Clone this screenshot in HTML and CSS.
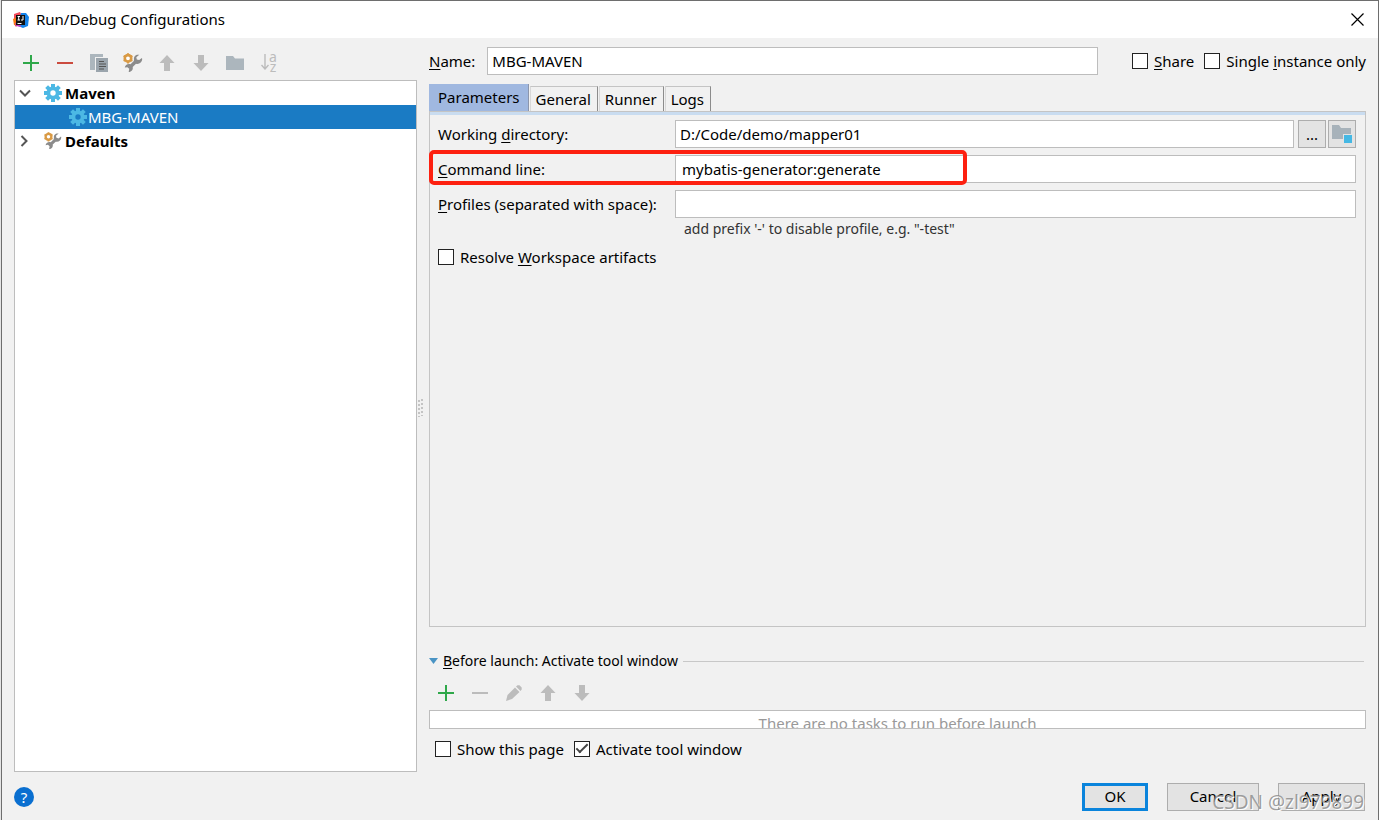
FILE: index.html
```html
<!DOCTYPE html>
<html lang="en">
  <head>
    <meta charset="UTF-8">
    <meta name="viewport" content="width=device-width, initial-scale=1">
    <title>Run/Debug Configurations</title>
    <link rel="stylesheet" href="styles.css">
  </head>
  <body>
    <!-- shared icons -->
    <svg class="sprite" width="0" height="0">
      <symbol id="plus" viewBox="0 0 16 16"><path d="M8 0v16M0 8h16" stroke="#2fa84a" stroke-width="2"/></symbol>
      <symbol id="minus" viewBox="0 0 16 16"><path d="M0 8h16" stroke="currentColor" stroke-width="2"/></symbol>
      <symbol id="up" viewBox="0 0 16 16"><path d="M8 0l7.500 8H11v8H5V8H.5z" fill="#bcbcbc"/></symbol>
      <symbol id="down" viewBox="0 0 16 16"><path d="M8 16l7.500-8H11V0H5v8H.5z" fill="#bcbcbc"/></symbol>
      <symbol id="gear" viewBox="0 0 18 18">
        <g fill="#4cb8e4">
          <rect x="7" y="0" width="4" height="18"/>
          <rect x="7" y="0" width="4" height="18" transform="rotate(45 9 9)"/>
          <rect x="7" y="0" width="4" height="18" transform="rotate(90 9 9)"/>
          <rect x="7" y="0" width="4" height="18" transform="rotate(135 9 9)"/>
          <circle cx="9" cy="9" r="6.500"/>
        </g>
        <circle cx="9" cy="9" r="2.700" fill="var(--hole)"/>
      </symbol>
      <symbol id="wrench" viewBox="0 0 20 20">
        <path d="M16.300 1.800c-3-.8-5.800 1.400-5.300 4.600L10.800 8 7.500 11.300c-2.800-.9-5.500.8-5.700 3.300l2.600-.4 1.800 1.600-.5 3.200c2.800 0 4.600-2.400 4-5l3.300-3.300c3.300.9 6-1.600 6.200-4.700l-.3-.9-2.700 2-2.400-.6-.5-2.300z" fill="#8b8b8b"/>
        <circle cx="5" cy="5.300" r="3.200" fill="#fff" stroke="#d99a45" stroke-width="2.600"/>
        <path d="M5 .2v1.500M5 9v1.500M.6 2.800l1.300.7M8 7.100l1.400.7M.6 7.800l1.300-.7M8 3.500l1.400-.7" stroke="#d99a45" stroke-width="2"/>
      </symbol>
    </svg>

    <div class="dialog">
      <header class="titlebar">
        <svg class="logo" width="16" height="16" viewBox="0 0 16 16">
          <path d="M1 2l6-2 3 6-7 9-2-3z" fill="#f24a5a"/>
          <path d="M0 7l4-2 3 9-6-1z" fill="#f97a12"/>
          <path d="M8 1l5 0 3 4-1 9-5 2-5-2z" fill="#1583e9"/>
          <path d="M2 11l5 1 1 3-5-1z" fill="#c13cc1"/>
          <path d="M3 3h9v10H3z" fill="#111"/>
          <path d="M4.500 4.500h2.500M5.700 4.500v3.500M4.500 8h2.500M10 4v4H8M4.500 11.500h4" stroke="#fff" fill="none"/>
        </svg>
        <span>Run/Debug Configurations</span>
        <button class="close" aria-label="Close">
          <svg width="13" height="13" viewBox="0 0 13 13"><path d="M.5.5l12 12M12.500.5l-12 12" stroke="#000" stroke-width="1.200"/></svg>
        </button>
      </header>

      <main class="content">
        <aside class="side">
          <div class="toolbar">
            <button aria-label="Add"><svg width="16" height="16"><use href="#plus"/></svg></button>
            <button class="red" aria-label="Remove"><svg width="16" height="16"><use href="#minus"/></svg></button>
            <button aria-label="Copy">
              <svg width="18" height="18" viewBox="0 0 18 18">
                <path d="M0 0h13v3H5v13H0z" fill="#acb6bd"/>
                <path d="M6 4h12v14H6z" fill="#9ba5ad"/>
                <path d="M9 7.500h5M9 10h7M9 12.500h7M9 15h5" stroke="#555" stroke-width="1.200"/>
              </svg>
            </button>
            <button aria-label="Edit defaults"><svg width="20" height="20"><use href="#wrench"/></svg></button>
            <button aria-label="Move up"><svg width="16" height="16"><use href="#up"/></svg></button>
            <button aria-label="Move down"><svg width="16" height="16"><use href="#down"/></svg></button>
            <button aria-label="New folder">
              <svg width="18" height="14" viewBox="0 0 18 14"><path d="M0 0h7l2 2.500h9V14H0z" fill="#acb6bd"/></svg>
            </button>
            <button class="sort" aria-label="Sort">
              <svg width="8" height="16" viewBox="0 0 8 16"><path d="M4 0v15M.5 11L4 15l3.500-4" stroke="#bcbcbc" stroke-width="1.400" fill="none"/></svg>
              <span>a<br>z</span>
            </button>
          </div>
          <ul class="tree">
            <li class="node">
              <svg class="arrow" width="12" height="12" viewBox="0 0 12 12"><path d="M1 3.500l5 5 5-5" stroke="#555" stroke-width="2" fill="none"/></svg>
              <svg width="18" height="18"><use href="#gear"/></svg>
              <b>Maven</b>
            </li>
            <li class="node child selected">
              <svg width="18" height="18"><use href="#gear"/></svg>
              <span>MBG-MAVEN</span>
            </li>
            <li class="node">
              <svg class="arrow" width="12" height="12" viewBox="0 0 12 12"><path d="M2.500 1l5 5-5 5" stroke="#555" stroke-width="2" fill="none"/></svg>
              <svg width="18" height="18"><use href="#wrench"/></svg>
              <b>Defaults</b>
            </li>
          </ul>
        </aside>

        <div class="splitter">
          <svg width="6" height="18" viewBox="0 0 6 18"><path d="M2 1v17M5 0v17" stroke="#c4c4c4" stroke-width="2" stroke-dasharray="2 2"/></svg>
        </div>

        <section class="config">
          <div class="namerow">
            <label for="name"><u>N</u>ame:</label>
            <input id="name" class="field" type="text" value="MBG-MAVEN">
            <div class="checks">
              <label class="check"><input type="checkbox"><span><u>S</u>hare</span></label>
              <label class="check"><input type="checkbox"><span>Single <u>i</u>nstance only</span></label>
            </div>
          </div>

          <div class="tabs">
            <button class="tab active">Parameters</button>
            <button class="tab">General</button>
            <button class="tab">Runner</button>
            <button class="tab">Logs</button>
          </div>

          <div class="panel">
            <div class="row">
              <label for="dir">Working <u>d</u>irectory:</label>
              <input id="dir" class="field" type="text" value="D:/Code/demo/mapper01">
              <button class="small">...</button>
              <button class="small" aria-label="Choose module">
                <svg width="20" height="20" viewBox="0 0 20 20">
                  <path d="M0 1h7l2 3h10v11H0z" fill="#a7b2ba"/>
                  <path d="M11 10h9v10h-9z" fill="#e3e3e3"/>
                  <path d="M12 11h8v8h-8z" fill="#45b8e4"/>
                </svg>
              </button>
            </div>
            <div class="row marked">
              <label for="cmd"><u>C</u>ommand line:</label>
              <input id="cmd" class="field" type="text" value="mybatis-generator:generate">
            </div>
            <div class="row">
              <label for="profiles"><u>P</u>rofiles (separated with space):</label>
              <input id="profiles" class="field" type="text">
            </div>
            <p class="hint">add prefix '-' to disable profile, e.g. "-test"</p>
            <label class="check"><input type="checkbox"><span>Resolve <u>W</u>orkspace artifacts</span></label>
          </div>

          <div class="before">
            <svg width="9" height="6" viewBox="0 0 9 6"><path d="M0 0h9L4.500 6z" fill="#4a94c4"/></svg>
            <span><u>B</u>efore launch: Activate tool window</span>
          </div>
          <div class="toolbar">
            <button aria-label="Add task"><svg width="16" height="16"><use href="#plus"/></svg></button>
            <button class="gray" aria-label="Remove task"><svg width="16" height="16"><use href="#minus"/></svg></button>
            <button aria-label="Edit task">
              <svg width="16" height="16" viewBox="0 0 16 16"><path d="M0 16l1.500-6 7.500-7.500 4.500 4.500L6 14zM10 1.500L11.500.3h2L15.700 2.500v2L14.500 6z" fill="#bcbcbc"/></svg>
            </button>
            <button aria-label="Task up"><svg width="16" height="16"><use href="#up"/></svg></button>
            <button aria-label="Task down"><svg width="16" height="16"><use href="#down"/></svg></button>
          </div>
          <div class="tasks">There are no tasks to run before launch</div>
          <div class="checks bottom">
            <label class="check"><input type="checkbox"><span>Show this page</span></label>
            <label class="check"><input type="checkbox" checked><span>Activate tool window</span></label>
          </div>
        </section>
      </main>

      <footer class="footer">
        <button class="help" aria-label="Help">?</button>
        <button class="btn ok">OK</button>
        <button class="btn">Cancel</button>
        <button class="btn">Apply</button>
      </footer>
      <div class="watermark">CSDN @zl979899</div>
    </div>
  </body>
</html>
```
FILE: styles.css
```css
*, *::before, *::after{box-sizing: border-box;}
body{
  margin: 0;
  background-color: #e4e4e4;
  font-family: "Noto Sans", "Open Sans", sans-serif;
  font-size: 15px;
  line-height: 20px;
  color: #000;
}
button, input{
  font: inherit;
  color: inherit;
  margin: 0;
}
button{
  padding: 0;
  border: none;
  background: none;
}
u{
  text-underline-offset: 2px;
}
.sprite{
  position: absolute;
}
.dialog{
  position: relative;
  display: flex;
  flex-direction: column;
  height: 100vh;
  margin-left: 1px;
  border: 1px solid #6e6e6e;
  border-bottom: none;
  background-color: #f1f1f1;
}
.titlebar{
  display: flex;
  align-items: center;
  gap: 7px;
  flex: 0 0 37px;
  padding: 0 14px 0 11px;
  background-color: #fff;
}
.titlebar span{
  padding-bottom: 2px;
}
.close{
  display: flex;
  margin-left: auto;
}
.content{
  display: flex;
  flex: 1;
  min-height: 0;
  padding: 0 12px;
}

/* left column */
.side{
  display: flex;
  flex-direction: column;
  flex: 0 0 403px;
}
.toolbar{
  display: flex;
  align-items: center;
  gap: 14px;
  padding-left: 7px;
}
.side .toolbar{
  height: 42px;
  padding-top: 8px;
}
.toolbar button{
  display: flex;
  align-items: center;
  justify-content: center;
  width: 20px;
  height: 20px;
}
.red{color: #cb4b3f;}
.gray{color: #bcbcbc;}
.toolbar .sort{
  padding-bottom: 3px;
  color: #bcbcbc;
  font-size: 14px;
  line-height: 10px;
}
.tree{
  flex: 1;
  margin: 0;
  padding: 0;
  list-style: none;
  border: 1px solid #bdbdbd;
  background-color: #fff;
}
.node{
  --hole: #fff;
  display: flex;
  align-items: center;
  height: 24px;
  padding-left: 4px;
  gap: 3px;
}
.arrow{
  margin-right: 10px;
}
.child{
  padding-left: 54px;
  gap: 1px;
}
.selected{
  --hole: #1a7bc4;
  color: #fff;
  background-color: #1a7bc4;
}
.splitter{
  display: flex;
  align-items: center;
  flex: 0 0 12px;
  padding-top: 6px;
}

/* right column */
.config{
  display: flex;
  flex-direction: column;
  flex: 1;
  min-width: 0;
}
.namerow{
  display: flex;
  align-items: center;
  gap: 12px;
  padding: 9px 0;
}
.field{
  flex: 1;
  min-width: 0;
  height: 28px;
  padding: 0 4px;
  border: 1px solid #bdbdbd;
  background-color: #fff;
  outline: none;
}
.checks{
  display: flex;
  gap: 10px;
}
.namerow .checks{
  padding-left: 22px;
}
.check{
  display: flex;
  align-items: center;
  gap: 6px;
}
.check input{
  appearance: none;
  display: grid;
  place-items: center;
  width: 16px;
  height: 16px;
  border: 1px solid #222;
  background-color: #fff;
}
.check input:checked::before{
  content: "";
  width: 12px;
  height: 6px;
  margin-bottom: 4px;
  border-left: 2px solid #444;
  border-bottom: 2px solid #444;
  transform: rotate(-45deg);
}
.tabs{
  display: flex;
  align-items: flex-end;
  height: 27px;
}
.tab{
  height: 25px;
  margin-right: 1px;
  padding: 0 6px 0 5px;
  border-top: 1px solid #c4c4c4;
  border-left: 1px solid #d8d8d8;
  border-right: 1px solid #8c8c8c;
}
.tab.active{
  height: 27px;
  padding: 0 8px 2px 9px;
  border: none;
  border-right: 1px solid #8c96ac;
  background-color: #a0b8e0;
}
.panel{
  flex: 1;
  padding: 5px 9px 0 8px;
  border: 1px solid #c4c4c4;
  box-shadow: inset 0 3px #c9dcf0;
}
.row{
  display: flex;
  align-items: center;
  margin: 3px 0 7px;
}
.row + .row{
  margin-top: 0;
}
.row label{
  flex: 0 0 237px;
}
.small{
  display: flex;
  align-items: center;
  justify-content: center;
  width: 28px;
  height: 28px;
  margin-left: 2px;
  border: 1px solid #adadad;
  background-color: #e3e3e3;
}
.field + .small{
  margin-left: 4px;
}
.marked{
  position: relative;
}
.marked .field{
  padding-left: 6px;
}
/* red frame round the command line */
.marked::after{
  content: "";
  position: absolute;
  left: -9px;
  top: -5px;
  width: 538px;
  height: 35px;
  border: 4px solid #fd2010;
  border-radius: 5px;
  pointer-events: none;
}
.hint{
  margin: -6px 0 8px 246px;
  font-size: 14px;
  color: #333;
}
.before{
  display: flex;
  align-items: center;
  gap: 5px;
  padding: 24px 2px 12px 0;
  font-size: 14px;
}
.before::after{
  content: "";
  flex: 1;
  height: 1px;
  background-color: #c8c8c8;
}
.tasks{
  height: 19px;
  margin-top: 7px;
  padding-top: 2px;
  overflow: hidden;
  border: 1px solid #bdbdbd;
  background-color: #fff;
  color: #999;
  text-align: center;
}
.bottom{
  padding: 10px 0 13px 6px;
}

/* bottom bar */
.footer{
  display: flex;
  align-items: flex-start;
  flex: 0 0 48px;
  padding: 11px 13px 0 12px;
}
.help{
  width: 20px;
  height: 20px;
  margin: 4px auto 0 0;
  border-radius: 50%;
  background-color: #0a6fd0;
  color: #fff;
}
.btn{
  width: 92px;
  height: 28px;
  padding-bottom: 2px;
  border: 1px solid #adadad;
  background-color: #e3e3e3;
}
.btn + .btn{
  margin-left: 19px;
}
.btn:last-child{
  width: 87px;
}
.btn.ok{
  width: 66px;
  border: 3px solid #0a84dc;
}
.watermark{
  position: absolute;
  right: 14px;
  bottom: 4px;
  font-size: 19px;
  line-height: 28px;
  color: rgba(130, 130, 130, 0.75);
  text-shadow: 1px 1px #fff;
  pointer-events: none;
}
```
